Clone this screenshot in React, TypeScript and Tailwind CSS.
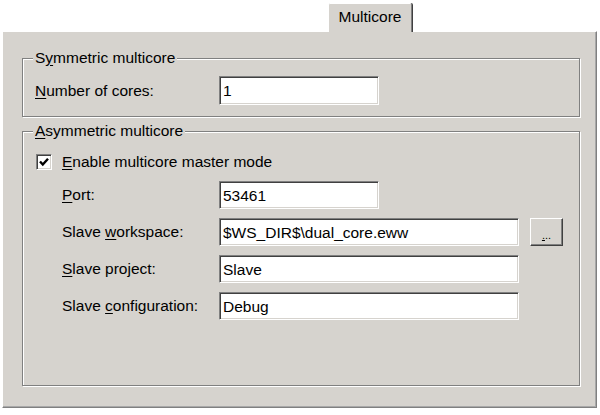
import React from "react"

const sunken =
  "bg-white border border-t-[#808080] border-l-[#808080] border-b-white border-r-white shadow-[inset_1px_1px_0_#404040,inset_-1px_-1px_0_#d6d3ce]"

function Field({ value, wide }: { value: string; wide?: boolean }) {
  return (
    <div className={`${sunken} h-[28px] ${wide ? "w-[300px]" : "w-[160px]"} flex items-center pl-[3px] pt-[1px] whitespace-nowrap`}>
      {value}
    </div>
  )
}

function Mn({ children }: { children: React.ReactNode }) {
  return <span className="underline underline-offset-2 decoration-1">{children}</span>
}

function GroupLabel({ children }: { children: React.ReactNode }) {
  return (
    <div className="-mt-[10px] ml-[10px] h-[18px] leading-[18px] px-[2px] w-fit bg-[#d6d3ce]">{children}</div>
  )
}

const group =
  "border border-[#808080] shadow-[inset_1px_1px_0_#fff,1px_1px_0_#fff]"

export default function App() {
  return (
    <div
      className="w-[600px] h-[415px] bg-white pt-[3px] pl-[2px] text-[15.5px] text-black"
      style={{ fontFamily: '"Liberation Sans", Arial, sans-serif' }}
    >
      <div className="flex pl-[326px]">
        <div className="relative -mb-px h-[29px] w-[84px] flex items-center justify-center pb-[2px] bg-[#d6d3ce] border-l border-t border-white border-r border-r-[#808080] shadow-[1px_0_0_#404040] rounded-t-[2px]">
          Multicore
        </div>
      </div>

      <div className="w-[595px] h-[377px] bg-[#d6d3ce] border border-t-white border-l-white border-r-[#808080] border-b-[#808080] shadow-[inset_-1px_-1px_0_#a8a8a8] pt-[26px] pl-[19px] pr-[16px]">
        <div className={`${group} pb-[11px]`}>
          <GroupLabel>
            S<Mn>y</Mn>mmetric multicore
          </GroupLabel>
          <div className="mt-[9px] pl-[12px] flex items-center">
            <div className="w-[184px]">
              <Mn>N</Mn>umber of cores:
            </div>
            <div className={`${sunken} h-[29px] w-[160px] flex items-center pl-[3px] pt-[1px]`}>1</div>
          </div>
        </div>

        <div className={`${group} mt-[14px] h-[255px]`}>
          <GroupLabel>
            <Mn>A</Mn>symmetric multicore
          </GroupLabel>
          <div className="mt-[13px] pl-[13px] h-[18px] flex items-center gap-[10px]">
            <div className={`${sunken} w-[16px] h-[16px] flex items-center justify-center`}>
              <svg width="12" height="12" viewBox="0 0 12 12">
                <polyline points="2,5.5 4.8,8.5 10,2.8" fill="none" stroke="#000" strokeWidth="2.4" />
              </svg>
            </div>
            <div>
              <Mn>E</Mn>nable multicore master mode
            </div>
          </div>

          <div className="mt-[10px] pl-[39px] flex flex-col gap-[9px]">
            <div className="flex items-center">
              <div className="w-[157px]">
                <Mn>P</Mn>ort:
              </div>
              <Field value="53461" />
            </div>
            <div className="flex items-center">
              <div className="w-[157px]">
                Slave <Mn>w</Mn>orkspace:
              </div>
              <Field value="$WS_DIR$\dual_core.eww" wide />
              <div className="ml-[11px] w-[33px] h-[28px] flex items-end justify-center pb-[4px] text-[11px] leading-none border border-t-white border-l-white border-r-[#404040] border-b-[#404040] shadow-[inset_-1px_-1px_0_#808080]">
                <span className="underline decoration-1">.</span>..
              </div>
            </div>
            <div className="flex items-center">
              <div className="w-[157px]">
                <Mn>S</Mn>lave project:
              </div>
              <Field value="Slave" wide />
            </div>
            <div className="flex items-center">
              <div className="w-[157px]">
                Slave <Mn>c</Mn>onfiguration:
              </div>
              <Field value="Debug" wide />
            </div>
          </div>
        </div>
      </div>
    </div>
  )
}
